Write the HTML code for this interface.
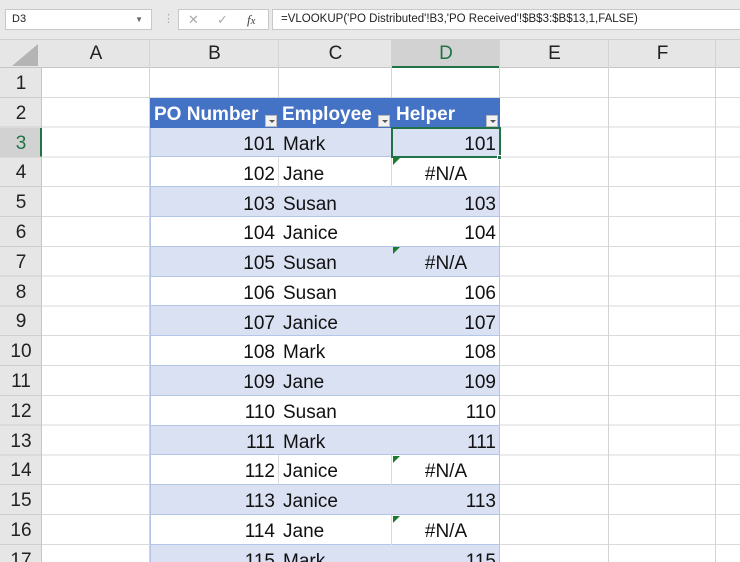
<!DOCTYPE html>
<html><head><meta charset="utf-8"><style>
html,body{margin:0;width:740px;height:562px;overflow:hidden}
body{background:#fff;font-family:"Liberation Sans",sans-serif;position:relative}
.a{position:absolute;box-sizing:border-box}
.t{position:absolute;font-size:19px;line-height:30px;height:30px;white-space:nowrap;color:#111;padding-top:2px}
.rh{position:absolute;left:0;width:42px;text-align:center;font-size:19px;line-height:30px;color:#222;padding-top:1px}
.ch{position:absolute;top:40px;height:28px;line-height:28px;text-align:center;font-size:19px;color:#222}
.fb{position:absolute;width:12px;height:12px;background:#f2f2f2;border:1px solid #bbb;box-sizing:border-box;top:115px}
.fb:after{content:"";position:absolute;left:3px;top:4px;border-left:3px solid transparent;border-right:3px solid transparent;border-top:3px solid #555}
.tri{position:absolute;left:393px;width:0;height:0;border-top:7px solid #1e7a2e;border-right:7px solid transparent}
</style></head><body>
<div class="a" style="left:0;top:0;width:740px;height:40px;background:#e9e9e9;border-bottom:1px solid #d0d0d0"></div>
<div class="a" style="left:5px;top:9px;width:147px;height:21px;background:#fff;border:1px solid #c8c8c8;font-size:11px;line-height:19px;padding-left:6px;color:#222">D3<span style="position:absolute;right:8px;top:0;font-size:8px;color:#666">▼</span></div>
<div class="a" style="left:163px;top:12px;font-size:11px;color:#aaa">⋮</div>
<div class="a" style="left:178px;top:9px;width:91px;height:21px;background:#fff;border:1px solid #c8c8c8;font-size:13px;line-height:19px;color:#aaa"><span style="position:absolute;left:9px">✕</span><span style="position:absolute;left:38px">✓</span><span style="position:absolute;left:68px;color:#444;font-style:italic;font-family:'Liberation Serif',serif">f<small>x</small></span></div>
<div class="a" style="left:272px;top:9px;width:470px;height:21px;background:#fff;border:1px solid #c8c8c8;font-size:11.5px;line-height:19px;padding-left:8px;color:#222;white-space:nowrap">=VLOOKUP('PO Distributed'!B3,'PO Received'!$B$3:$B$13,1,FALSE)</div>
<div class="a" style="left:0;top:40px;width:740px;height:28px;background:#e6e6e6;border-bottom:1px solid #c6c6c6"></div>
<div class="a" style="left:392px;top:40px;width:108px;height:28px;background:#d2d2d2;border-bottom:2px solid #217346"></div>
<div class="a" style="left:12px;top:44px;width:0;height:0;border-left:26px solid transparent;border-bottom:22px solid #b4b4b4"></div>
<div class="ch" style="left:42px;width:108px">A</div>
<div class="ch" style="left:150px;width:129px">B</div>
<div class="ch" style="left:279px;width:113px">C</div>
<div class="ch" style="left:392px;width:108px;color:#217346">D</div>
<div class="ch" style="left:500px;width:109px">E</div>
<div class="ch" style="left:609px;width:107px">F</div>
<div class="a" style="left:0;top:68px;width:42px;height:494px;background:#e6e6e6;border-right:1px solid #c6c6c6"></div>
<div class="a" style="left:0;top:127.6px;width:42px;height:29.8px;background:#d2d2d2;border-right:2px solid #217346"></div>
<div class="a" style="left:42px;top:68px;width:698px;height:494px;background:repeating-linear-gradient(to bottom,transparent 0,transparent 28.8px,#dadada 28.8px,#dadada 29.8px)"></div>
<div class="a" style="left:0;top:68px;width:42px;height:494px;background:repeating-linear-gradient(to bottom,transparent 0,transparent 28.8px,#cfcfcf 28.8px,#cfcfcf 29.8px)"></div>
<div class="a" style="left:149px;top:40px;width:1px;height:522px;background:#d4d4d4"></div>
<div class="a" style="left:278px;top:40px;width:1px;height:522px;background:#d4d4d4"></div>
<div class="a" style="left:391px;top:40px;width:1px;height:522px;background:#d4d4d4"></div>
<div class="a" style="left:499px;top:40px;width:1px;height:522px;background:#d4d4d4"></div>
<div class="a" style="left:608px;top:40px;width:1px;height:522px;background:#d4d4d4"></div>
<div class="a" style="left:715px;top:40px;width:1px;height:522px;background:#d4d4d4"></div>
<div class="a" style="left:150px;top:97.8px;width:350px;height:29.8px;background:#4472c4"></div>
<div class="a" style="left:150px;top:127.6px;width:350px;height:29.8px;background:#d9e1f2;border-bottom:1px solid #b4c6e7"></div>
<div class="a" style="left:150px;top:157.4px;width:350px;height:29.8px;background:#fff;border-bottom:1px solid #b4c6e7"></div>
<div class="a" style="left:150px;top:187.2px;width:350px;height:29.8px;background:#d9e1f2;border-bottom:1px solid #b4c6e7"></div>
<div class="a" style="left:150px;top:217px;width:350px;height:29.8px;background:#fff;border-bottom:1px solid #b4c6e7"></div>
<div class="a" style="left:150px;top:246.8px;width:350px;height:29.8px;background:#d9e1f2;border-bottom:1px solid #b4c6e7"></div>
<div class="a" style="left:150px;top:276.6px;width:350px;height:29.8px;background:#fff;border-bottom:1px solid #b4c6e7"></div>
<div class="a" style="left:150px;top:306.4px;width:350px;height:29.8px;background:#d9e1f2;border-bottom:1px solid #b4c6e7"></div>
<div class="a" style="left:150px;top:336.2px;width:350px;height:29.8px;background:#fff;border-bottom:1px solid #b4c6e7"></div>
<div class="a" style="left:150px;top:366px;width:350px;height:29.8px;background:#d9e1f2;border-bottom:1px solid #b4c6e7"></div>
<div class="a" style="left:150px;top:395.8px;width:350px;height:29.8px;background:#fff;border-bottom:1px solid #b4c6e7"></div>
<div class="a" style="left:150px;top:425.6px;width:350px;height:29.8px;background:#d9e1f2;border-bottom:1px solid #b4c6e7"></div>
<div class="a" style="left:150px;top:455.4px;width:350px;height:29.8px;background:#fff;border-bottom:1px solid #b4c6e7"></div>
<div class="a" style="left:150px;top:485.2px;width:350px;height:29.8px;background:#d9e1f2;border-bottom:1px solid #b4c6e7"></div>
<div class="a" style="left:150px;top:515px;width:350px;height:29.8px;background:#fff;border-bottom:1px solid #b4c6e7"></div>
<div class="a" style="left:150px;top:544.8px;width:350px;height:17.2px;background:#d9e1f2"></div>
<div class="a" style="left:150px;top:127.6px;width:1px;height:435px;background:#b4c6e7"></div>
<div class="a" style="left:499px;top:127.6px;width:1px;height:435px;background:#b4c6e7"></div>
<div class="a" style="left:278px;top:157.4px;width:1px;height:30px;background:#dadada"></div>
<div class="a" style="left:391px;top:157.4px;width:1px;height:30px;background:#dadada"></div>
<div class="a" style="left:278px;top:455.4px;width:1px;height:30px;background:#dadada"></div>
<div class="a" style="left:391px;top:455.4px;width:1px;height:30px;background:#dadada"></div>
<div class="a" style="left:391px;top:515px;width:1px;height:30px;background:#dadada"></div>
<div class="t" style="left:154px;top:98px;color:#fff;font-weight:bold">PO Number</div>
<div class="t" style="left:282px;top:98px;color:#fff;font-weight:bold">Employee</div>
<div class="t" style="left:396px;top:98px;color:#fff;font-weight:bold">Helper</div>
<div class="fb" style="left:265px"></div><div class="fb" style="left:378px"></div><div class="fb" style="left:486px"></div>
<div class="rh" style="top:68px">1</div><div class="rh" style="top:97.8px">2</div><div class="rh" style="top:127.6px;color:#217346">3</div><div class="rh" style="top:157.4px">4</div><div class="rh" style="top:187.2px">5</div><div class="rh" style="top:217px">6</div><div class="rh" style="top:246.8px">7</div><div class="rh" style="top:276.6px">8</div><div class="rh" style="top:306.4px">9</div><div class="rh" style="top:336.2px">10</div><div class="rh" style="top:366px">11</div><div class="rh" style="top:395.8px">12</div><div class="rh" style="top:425.6px">13</div><div class="rh" style="top:455.4px">14</div><div class="rh" style="top:485.2px">15</div><div class="rh" style="top:515px">16</div><div class="rh" style="top:544.8px">17</div>
<div class="t" style="left:150px;width:125px;text-align:right;top:128px">101</div><div class="t" style="left:283px;top:128px">Mark</div><div class="t" style="left:392px;width:104px;text-align:right;top:128px">101</div>
<div class="t" style="left:150px;width:125px;text-align:right;top:158px">102</div><div class="t" style="left:283px;top:158px">Jane</div><div class="t" style="left:392px;width:108px;text-align:center;top:158px">#N/A</div>
<div class="t" style="left:150px;width:125px;text-align:right;top:188px">103</div><div class="t" style="left:283px;top:188px">Susan</div><div class="t" style="left:392px;width:104px;text-align:right;top:188px">103</div>
<div class="t" style="left:150px;width:125px;text-align:right;top:217px">104</div><div class="t" style="left:283px;top:217px">Janice</div><div class="t" style="left:392px;width:104px;text-align:right;top:217px">104</div>
<div class="t" style="left:150px;width:125px;text-align:right;top:247px">105</div><div class="t" style="left:283px;top:247px">Susan</div><div class="t" style="left:392px;width:108px;text-align:center;top:247px">#N/A</div>
<div class="t" style="left:150px;width:125px;text-align:right;top:277px">106</div><div class="t" style="left:283px;top:277px">Susan</div><div class="t" style="left:392px;width:104px;text-align:right;top:277px">106</div>
<div class="t" style="left:150px;width:125px;text-align:right;top:307px">107</div><div class="t" style="left:283px;top:307px">Janice</div><div class="t" style="left:392px;width:104px;text-align:right;top:307px">107</div>
<div class="t" style="left:150px;width:125px;text-align:right;top:336px">108</div><div class="t" style="left:283px;top:336px">Mark</div><div class="t" style="left:392px;width:104px;text-align:right;top:336px">108</div>
<div class="t" style="left:150px;width:125px;text-align:right;top:366px">109</div><div class="t" style="left:283px;top:366px">Jane</div><div class="t" style="left:392px;width:104px;text-align:right;top:366px">109</div>
<div class="t" style="left:150px;width:125px;text-align:right;top:396px">110</div><div class="t" style="left:283px;top:396px">Susan</div><div class="t" style="left:392px;width:104px;text-align:right;top:396px">110</div>
<div class="t" style="left:150px;width:125px;text-align:right;top:426px">111</div><div class="t" style="left:283px;top:426px">Mark</div><div class="t" style="left:392px;width:104px;text-align:right;top:426px">111</div>
<div class="t" style="left:150px;width:125px;text-align:right;top:455px">112</div><div class="t" style="left:283px;top:455px">Janice</div><div class="t" style="left:392px;width:108px;text-align:center;top:455px">#N/A</div>
<div class="t" style="left:150px;width:125px;text-align:right;top:485px">113</div><div class="t" style="left:283px;top:485px">Janice</div><div class="t" style="left:392px;width:104px;text-align:right;top:485px">113</div>
<div class="t" style="left:150px;width:125px;text-align:right;top:515px">114</div><div class="t" style="left:283px;top:515px">Jane</div><div class="t" style="left:392px;width:108px;text-align:center;top:515px">#N/A</div>
<div class="t" style="left:150px;width:125px;text-align:right;top:545px">115</div><div class="t" style="left:283px;top:545px">Mark</div><div class="t" style="left:392px;width:104px;text-align:right;top:545px">115</div>
<div class="tri" style="top:158px"></div><div class="tri" style="top:247px"></div><div class="tri" style="top:456px"></div><div class="tri" style="top:516px"></div>
<div class="a" style="left:391px;top:127px;width:110px;height:31px;border:2px solid #217346"></div>
<div class="a" style="left:497px;top:155px;width:5px;height:5px;background:#217346;border:1px solid #fff"></div>
</body></html>
